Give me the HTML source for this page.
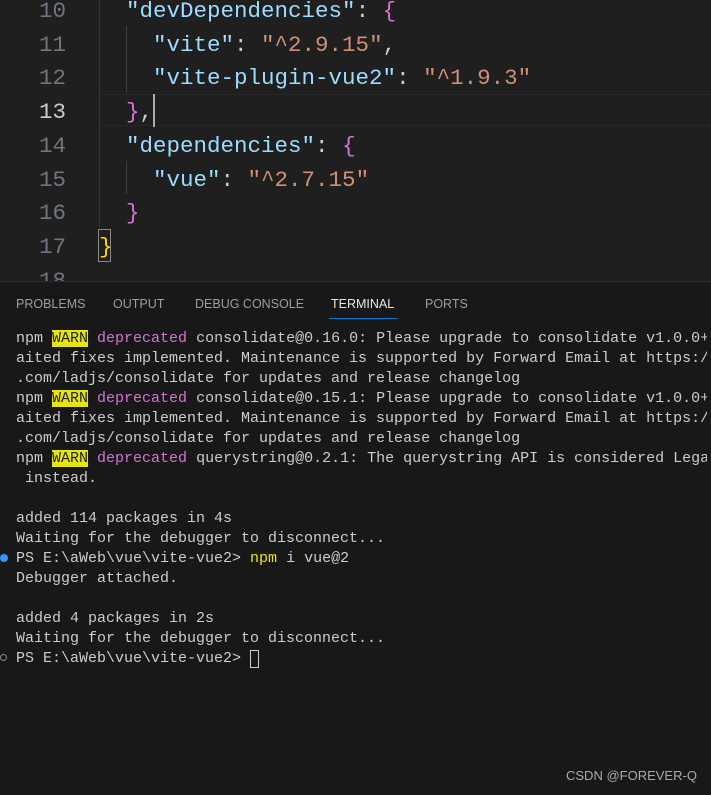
<!DOCTYPE html>
<html><head><style>
html,body{margin:0;padding:0;width:711px;height:794px;overflow:hidden;background:#181818}
#ed{position:absolute;left:0;top:0;width:711px;height:281px;background:#1f1f1f;overflow:hidden}
.ln{position:absolute;left:0;width:66px;text-align:right;font:22.5px "Liberation Mono",monospace;color:#6e7681;white-space:pre}
.cl{position:absolute;left:99px;font:22.5px "Liberation Mono",monospace;color:#cccccc;white-space:pre}
.k{color:#9cdcfe}.s{color:#ce9178}.y{color:#ffd700}.p{color:#da70d6}
.g{position:absolute;width:1px;background:#404040}
#panel{position:absolute;left:0;top:281px;width:711px;height:513px;background:#181818;border-top:1px solid #2b2b2b}
.tab{position:absolute;top:15px;font:12.5px "Liberation Sans",sans-serif;color:#9d9d9d}
.t{position:absolute;left:16px;width:691px;overflow:hidden;font:15px "Liberation Mono",monospace;color:#cccccc;white-space:pre;line-height:20px}
.w{background:#e5e510;color:#1e1e1e}.d{color:#d670d6}.n{color:#e5e510}
</style></head><body>
<div id="ed">
<div style="position:absolute;left:99px;top:94px;width:612px;height:30px;border-top:1px solid #282828;border-bottom:1px solid #282828"></div>
<div class="g" style="left:126px;top:26px;height:66px"></div>
<div class="g" style="left:126px;top:161px;height:33px"></div>
<div class="g" style="left:99px;top:0;height:230px;background:#333"></div>
<div class="ln" style="top:-2px">10</div>
<div class="ln" style="top:32px">11</div>
<div class="ln" style="top:65px">12</div>
<div class="ln" style="top:99px;color:#cccccc">13</div>
<div class="ln" style="top:133px">14</div>
<div class="ln" style="top:167px">15</div>
<div class="ln" style="top:200px">16</div>
<div class="ln" style="top:234px">17</div>
<div class="ln" style="top:268px">18</div>
<div class="cl" style="top:-2px">  <span class="k">"devDependencies"</span>: <span class="p">{</span></div>
<div class="cl" style="top:32px">    <span class="k">"vite"</span>: <span class="s">"^2.9.15"</span>,</div>
<div class="cl" style="top:65px">    <span class="k">"vite-plugin-vue2"</span>: <span class="s">"^1.9.3"</span></div>
<div class="cl" style="top:99px">  <span class="p">}</span>,</div>
<div style="position:absolute;left:153px;top:94px;width:2px;height:33px;background:#aeafad"></div>
<div class="cl" style="top:133px">  <span class="k">"dependencies"</span>: <span class="p">{</span></div>
<div class="cl" style="top:167px">    <span class="k">"vue"</span>: <span class="s">"^2.7.15"</span></div>
<div class="cl" style="top:200px">  <span class="p">}</span></div>
<div style="position:absolute;left:98px;top:229px;width:13px;height:33px;border:1px solid #888;box-sizing:border-box"></div>
<div class="cl" style="top:234px"><span class="y">}</span></div>
</div>
<div id="panel">
<div class="tab" style="left:16px">PROBLEMS</div>
<div class="tab" style="left:113px">OUTPUT</div>
<div class="tab" style="left:195px">DEBUG CONSOLE</div>
<div class="tab" style="left:331px;color:#e7e7e7">TERMINAL</div>
<div style="position:absolute;left:329px;top:36px;width:69px;height:1px;background:#0078d4"></div>
<div class="tab" style="left:425px">PORTS</div>
<div class="t" style="top:47px">npm <span class="w">WARN</span> <span class="d">deprecated</span> consolidate@0.16.0: Please upgrade to consolidate v1.0.0+
aited fixes implemented. Maintenance is supported by Forward Email at https://
.com/ladjs/consolidate for updates and release changelog
npm <span class="w">WARN</span> <span class="d">deprecated</span> consolidate@0.15.1: Please upgrade to consolidate v1.0.0+
aited fixes implemented. Maintenance is supported by Forward Email at https://
.com/ladjs/consolidate for updates and release changelog
npm <span class="w">WARN</span> <span class="d">deprecated</span> querystring@0.2.1: The querystring API is considered Legacy
 instead.

added 114 packages in 4s
Waiting for the debugger to disconnect...
PS E:\aWeb\vue\vite-vue2&gt; <span class="n">npm</span> i vue@2
Debugger attached.

added 4 packages in 2s
Waiting for the debugger to disconnect...
PS E:\aWeb\vue\vite-vue2&gt; </div>
<div style="position:absolute;left:250px;top:368px;width:9px;height:18px;border:1px solid #ccc;box-sizing:border-box"></div>
<div style="position:absolute;left:0;top:272px;width:8px;height:8px;border-radius:50%;background:#3794ff"></div>
<div style="position:absolute;left:0;top:372px;width:7px;height:7px;border-radius:50%;border:1px solid #888;box-sizing:border-box"></div>
<div style="position:absolute;left:566px;top:486px;font:13px 'Liberation Sans',sans-serif;color:#aaa">CSDN @FOREVER-Q</div>
</div>
</body></html>
